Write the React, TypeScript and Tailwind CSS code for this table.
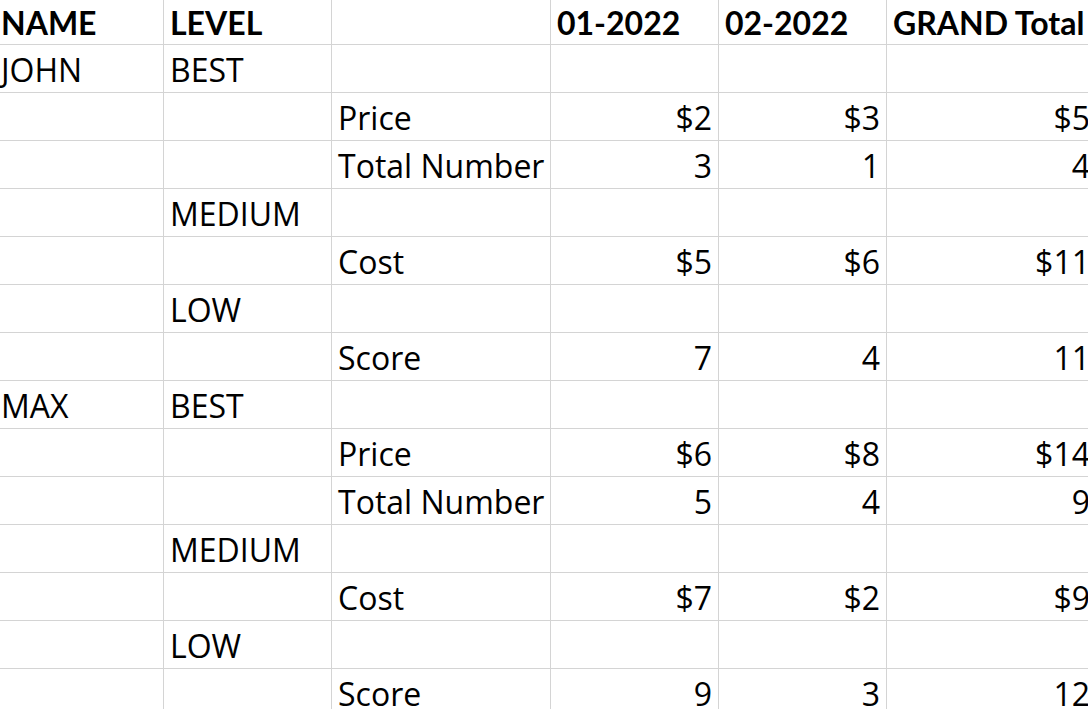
import React from 'react';

type Row = [string, string, string, string, string, string];

const rows: Row[] = [
  ['JOHN', 'BEST', '', '', '', ''],
  ['', '', 'Price', '$2', '$3', '$5'],
  ['', '', 'Total Number', '3', '1', '4'],
  ['', 'MEDIUM', '', '', '', ''],
  ['', '', 'Cost', '$5', '$6', '$11'],
  ['', 'LOW', '', '', '', ''],
  ['', '', 'Score', '7', '4', '11'],
  ['MAX', 'BEST', '', '', '', ''],
  ['', '', 'Price', '$6', '$8', '$14'],
  ['', '', 'Total Number', '5', '4', '9'],
  ['', 'MEDIUM', '', '', '', ''],
  ['', '', 'Cost', '$7', '$2', '$9'],
  ['', 'LOW', '', '', '', ''],
  ['', '', 'Score', '9', '3', '12'],
];

const header = ['NAME', 'LEVEL', '', '01-2022', '02-2022', 'GRAND Total'];

// column widths, first one starts a bit left of the viewport
const widths = ['w-[169px]', 'w-[168px]', 'w-[219px]', 'w-[168px]', 'w-[168px]', 'w-[210px]'];

const Cell = ({ text, col, head }: { text: string; col: number; head?: boolean }) => {
  const numeric = col >= 3 && !head;
  return (
    <div
      className={`${widths[col]} shrink-0 flex items-end border-r border-b border-[#d4d4d4] px-[6px] overflow-hidden whitespace-nowrap ${
        numeric ? 'justify-end' : 'justify-start'
      } ${head ? 'h-[45px] pb-[5px]' : 'h-[48px] pb-[6px]'}`}
    >
      {head ? (
        <span className="text-[32px] leading-none font-bold" style={{ fontFamily: 'Lato, sans-serif' }}>
          {text}
        </span>
      ) : (
        <span className="text-[32px] leading-none" style={{ fontFamily: '"Open Sans", sans-serif' }}>
          {text}
        </span>
      )}
    </div>
  );
};

export default function App() {
  return (
    <div className="w-[1088px] h-[709px] overflow-hidden bg-white text-black">
      <div className="ml-[-5px] flex flex-col">
        <div className="flex">
          {header.map((h, i) => (
            <Cell key={i} text={h} col={i} head />
          ))}
        </div>
        {rows.map((r, ri) => (
          <div key={ri} className="flex">
            {r.map((c, ci) => (
              <Cell key={ci} text={c} col={ci} />
            ))}
          </div>
        ))}
      </div>
    </div>
  );
}
